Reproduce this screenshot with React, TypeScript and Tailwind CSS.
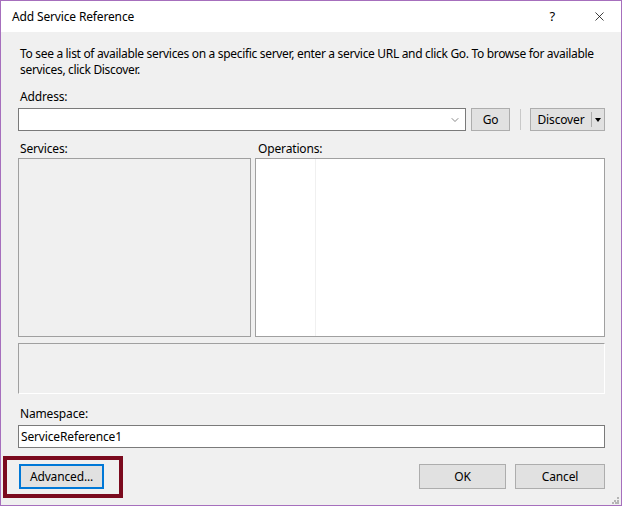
import { ChevronDown, X } from "lucide-react";

function Btn({ label, className }: { label: string; className: string }) {
  return (
    <div
      className={
        "flex items-center justify-center border border-[#adadad] bg-[#e1e1e1] text-[12px] text-black " +
        className
      }
    >
      {label}
    </div>
  );
}

export default function App() {
  return (
    <div
      className="h-[507px] w-[622px] bg-white"
      style={{ fontFamily: '"Noto Sans", "Open Sans", sans-serif' }}
    >
      <div className="flex h-[506px] w-[622px] flex-col overflow-hidden border border-[#a66fbd] bg-[#f0f0f0] text-[12px] tracking-[-0.15px] text-black">
        {/* title bar */}
        <div className="flex h-[31px] shrink-0 items-center bg-white pl-[11px]">
          <span className="text-[12px]">Add Service Reference</span>
          <span className="ml-auto mr-[37px] text-[13px]">?</span>
          <X className="mr-[14px] h-[15px] w-[15px]" strokeWidth={1.2} />
        </div>

        <div className="flex flex-1 flex-col pl-[17px] pr-[16px]">
          <p className="mt-[14px] pl-[2px] leading-[16px] tracking-[-0.32px]">
            To see a list of available services on a specific server, enter a service URL and click Go. To browse for available services, click Discover.
          </p>

          <div className="mt-[11px] pl-[2px] leading-[16px]">Address:</div>
          <div className="mt-[3px] flex h-[23px] shrink-0 items-center">
            <div className="flex h-full w-[448px] items-center justify-end border border-[#7a7a7a] bg-white pr-[4px]">
              <ChevronDown className="h-[12px] w-[12px] text-[#555]" strokeWidth={1.4} />
            </div>
            <Btn label="Go" className="ml-[5px] h-full w-[39px]" />
            <div className="ml-[10px] h-[21px] w-px bg-[#c9c9c9]" />
            <div className="ml-[9px] flex h-full flex-1 items-stretch border border-[#adadad] bg-[#e1e1e1]">
              <div className="flex flex-1 items-center justify-center">Discover</div>
              <div className="my-[3px] w-px bg-[#adadad]" />
              <div className="flex w-[12px] items-center justify-center">
                <div className="h-0 w-0 border-x-[3px] border-t-[4px] border-x-transparent border-t-black" />
              </div>
            </div>
          </div>

          <div className="mt-[10px] flex leading-[16px]">
            <div className="w-[237px] pl-[2px]">Services:</div>
            <div className="pl-[3px]">Operations:</div>
          </div>
          <div className="mt-[1px] flex h-[179px] shrink-0 gap-[4px]">
            <div className="w-[233px] border border-[#a0a0a0] bg-[#f0f0f0]" />
            <div className="flex flex-1 border border-[#a0a0a0] bg-white">
              <div className="w-[60px] border-r border-[#f0f0f0]" />
            </div>
          </div>

          <div className="mt-[6px] h-[51px] shrink-0 border-b border-l border-r border-t border-[#a0a0a0] border-b-white border-r-white bg-[#f0f0f0]" />

          <div className="mt-[12px] pl-[2px] leading-[16px]">Namespace:</div>
          <div className="mt-[3px] flex h-[23px] shrink-0 items-center border border-[#7a7a7a] bg-white pl-[2px]">
            ServiceReference1
          </div>

          <div className="mt-[8px] flex shrink-0 items-start">
            <div className="-ml-[15px] border-[4px] border-[#7b0a1e] pb-[5px] pl-[12px] pr-[15px] pt-[4px]">
              <div className="flex h-[25px] w-[85px] items-center justify-center border-[2px] border-[#0078d7] bg-[#e1e1e1]">
                Advanced...
              </div>
            </div>
            <Btn label="OK" className="ml-auto mt-[8px] h-[25px] w-[87px]" />
            <Btn label="Cancel" className="ml-[9px] mt-[8px] h-[25px] w-[90px]" />
            {/* resize grip */}
            <svg className="-mr-[14px] ml-[7px] mt-[41px] shrink-0" width="7" height="7" viewBox="0 0 7 7">
              <rect x="5" y="0" width="2" height="2" fill="#b5b5b5" />
              <rect x="2" y="3" width="2" height="2" fill="#b5b5b5" />
              <rect x="5" y="3" width="2" height="2" fill="#b5b5b5" />
              <rect x="0" y="5" width="2" height="2" fill="#b5b5b5" />
              <rect x="3" y="5" width="2" height="2" fill="#b5b5b5" />
              <rect x="5" y="5" width="2" height="2" fill="#b5b5b5" />
            </svg>
          </div>
        </div>
      </div>
    </div>
  );
}
